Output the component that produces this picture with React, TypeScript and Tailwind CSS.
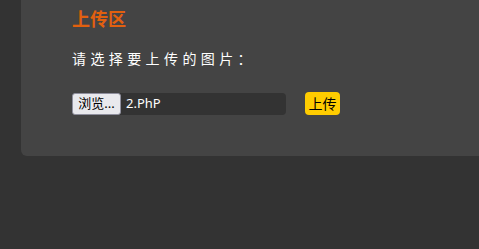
export default function App() {
  const font = { fontFamily: '"Noto Sans", "Noto Sans CJK SC", sans-serif' };
  return (
    <div className="w-[479px] h-[249px] bg-[#333333] overflow-hidden" style={font}>
      <div className="ml-[21px] h-[156px] bg-[#444444] rounded-bl-[6px] pl-[51px] pt-[7px]">
        <div className="text-[18px] font-bold text-[#e2600f] leading-[24px]">上传区</div>
        <div className="mt-[18px] text-[14px] text-white tracking-[4.4px] leading-[20px]">请选择要上传的图片：</div>
        <div className="mt-[23px] flex items-center">
          <div className="w-[214px] h-[22px] bg-[#333333] rounded-[4px] flex items-center">
            <div className="h-[22px] w-[49px] bg-[#e9e9ed] border border-[#8f8f9d] rounded-[3px] flex items-center justify-center text-[13px] text-black leading-none">浏览...</div>
            <div className="ml-[5px] text-[13px] text-white leading-none">2.PhP</div>
          </div>
          <div className="ml-[19px] h-[23px] w-[35px] bg-[#ffcc00] rounded-[4px] flex items-center justify-center text-[14px] text-black leading-none">上传</div>
        </div>
      </div>
    </div>
  );
}
